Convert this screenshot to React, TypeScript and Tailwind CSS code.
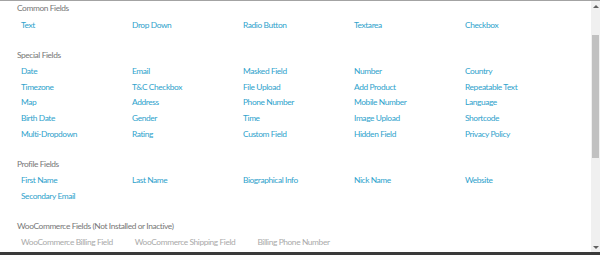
const sections = [
  {
    title: "Common Fields",
    items: ["Text", "Drop Down", "Radio Button", "Textarea", "Checkbox"],
  },
  {
    title: "Special Fields",
    items: [
      "Date", "Email", "Masked Field", "Number", "Country",
      "Timezone", "T&C Checkbox", "File Upload", "Add Product", "Repeatable Text",
      "Map", "Address", "Phone Number", "Mobile Number", "Language",
      "Birth Date", "Gender", "Time", "Image Upload", "Shortcode",
      "Multi-Dropdown", "Rating", "Custom Field", "Hidden Field", "Privacy Policy",
    ],
  },
  {
    title: "Profile Fields",
    items: ["First Name", "Last Name", "Biographical Info", "Nick Name", "Website", "Secondary Email"],
  },
];

const woo = ["WooCommerce Billing Field", "WooCommerce Shipping Field", "Billing Phone Number"];

export default function App() {
  return (
    <div
      className="w-[600px] h-[255px] overflow-hidden flex flex-col bg-white border-t border-[#a3a3a3]"
      style={{ fontFamily: 'Lato, "Open Sans", sans-serif' }}
    >
      <div className="flex-1 flex min-h-0">
        <div className="flex-1 pl-[17px] pt-[1px] text-[8.4px] tracking-[-0.4px]">
          {sections.map((s, i) => (
            <div key={s.title} className={i > 0 ? "mt-[15.3px]" : ""}>
              <div className="leading-[12px] text-[#777]">{s.title}</div>
              <div className="mt-[3.5px] ml-[4px] grid grid-cols-[repeat(5,111px)]">
                {s.items.map((it) => (
                  <a key={it} className="leading-[15.7px] text-[#2ea2cc] whitespace-nowrap cursor-pointer">
                    {it}
                  </a>
                ))}
              </div>
            </div>
          ))}
          <div className="mt-[15px]">
            <div className="leading-[12px] text-[#777]">WooCommerce Fields (Not Installed or Inactive)</div>
            <div className="mt-[3.5px] ml-[4px] flex gap-[22px]">
              {woo.map((it) => (
                <span key={it} className="leading-[15.7px] text-[#aaa] whitespace-nowrap">
                  {it}
                </span>
              ))}
            </div>
          </div>
        </div>
        <div className="w-[9px] bg-[#f0f0f0] flex flex-col items-center">
          <div className="h-[10px] flex items-center justify-center">
            <div className="w-0 h-0 border-l-[3px] border-r-[3px] border-b-[3px] border-l-transparent border-r-transparent border-b-[#606060]" />
          </div>
          <div className="mt-[24px] w-[7px] h-[123px] bg-[#c1c1c1]" />
          <div className="flex-1" />
          <div className="h-[10px] flex items-center justify-center">
            <div className="w-0 h-0 border-l-[3px] border-r-[3px] border-t-[3px] border-l-transparent border-r-transparent border-t-[#606060]" />
          </div>
        </div>
      </div>
      <div className="h-[3px] bg-[#3a3a3a]" />
    </div>
  );
}
